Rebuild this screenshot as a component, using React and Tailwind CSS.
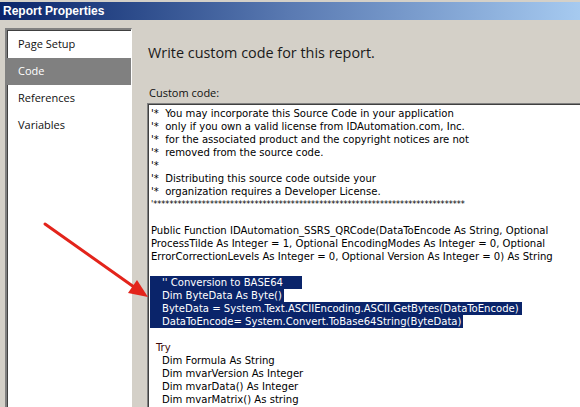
import React from "react";

const codeFont = { fontFamily: '"DejaVu Sans Condensed", "DejaVu Sans", sans-serif' };

function Line({ children, className = "" }) {
  return <div className={"h-[13px] leading-[13px] whitespace-pre " + className}>{children}</div>;
}

function Hi({ pr, children }) {
  return (
    <div className="h-[13px] leading-[13px] whitespace-pre">
      <span className={"inline-block h-[13px] bg-[#0a246a] text-white pl-[12px] -ml-[1px] " + pr}>{children}</span>
    </div>
  );
}

export default function App() {
  return (
    <div className="relative w-[580px] h-[407px] overflow-hidden bg-[#d4d0c8] flex flex-col pt-[2px]" style={{ fontFamily: '"Liberation Sans", Arial, sans-serif' }}>
      <div className="h-[18px] shrink-0 bg-gradient-to-r from-[#0a246a] via-[#5a7ab2] to-[#a6caf0] flex items-center pl-[3px]">
        <span className="text-white font-bold text-[12px] leading-none">Report Properties</span>
      </div>
      <div className="flex flex-1 min-h-0 pt-[8px]">
        <div className="ml-[5px] w-[127px] shrink-0 bg-white border-t-2 border-l-2 border-t-[#808080] border-l-[#808080] border-r border-r-white shadow-[inset_1px_1px_0_#404040] pt-[1px] text-[11px] text-[#101010]" style={{ fontFamily: '"Open Sans", sans-serif' }}>
          <div className="h-[27px] flex items-center pl-[11px]">Page Setup</div>
          <div className="h-[27px] flex items-center pl-[11px] bg-[#808080] text-white">Code</div>
          <div className="h-[27px] flex items-center pl-[11px]">References</div>
          <div className="h-[27px] flex items-center pl-[11px]">Variables</div>
        </div>
        <div className="flex-1 flex flex-col pl-[15px] min-w-0">
          <div className="h-[50px] shrink-0 flex items-center pl-[1px] text-[14.4px] text-[#1a1a1a]" style={{ fontFamily: '"Open Sans", sans-serif' }}>
            Write custom code for this report.
          </div>
          <div className="h-[25px] shrink-0 flex items-end pl-[2px] pb-[3px] text-[11px] leading-[14px] text-[#101010]" style={{ fontFamily: '"Open Sans", sans-serif' }}>
            Custom code:
          </div>
          <div className="flex-1 bg-white border-t border-l border-[#808080] shadow-[inset_1px_1px_0_#404040] pt-[3px] pl-[3px] text-[11.2px] text-black" style={codeFont}>
            <Line>{"'*  You may incorporate this Source Code in your application"}</Line>
            <Line>{"'*  only if you own a valid license from IDAutomation.com, Inc."}</Line>
            <Line>{"'*  for the associated product and the copyright notices are not"}</Line>
            <Line>{"'*  removed from the source code."}</Line>
            <Line>{"'*"}</Line>
            <Line>{"'*  Distributing this source code outside your"}</Line>
            <Line>{"'*  organization requires a Developer License."}</Line>
            <Line className="text-[9px]">{"'*****************************************************************************"}</Line>
            <Line>{" "}</Line>
            <Line>{"Public Function IDAutomation_SSRS_QRCode(DataToEncode As String, Optional"}</Line>
            <Line>{"ProcessTilde As Integer = 1, Optional EncodingModes As Integer = 0, Optional"}</Line>
            <Line>{"ErrorCorrectionLevels As Integer = 0, Optional Version As Integer = 0) As String"}</Line>
            <Line>{" "}</Line>
            <Hi pr="pr-[19px]">{"'' Conversion to BASE64"}</Hi>
            <Hi pr="pr-[2px]">{"Dim ByteData As Byte()"}</Hi>
            <Hi pr="pr-[3px]">{"ByteData = System.Text.ASCIIEncoding.ASCII.GetBytes(DataToEncode)"}</Hi>
            <Hi pr="pr-[2px]">{"DataToEncode= System.Convert.ToBase64String(ByteData)"}</Hi>
            <Line>{" "}</Line>
            <Line className="pl-[5px] text-[#3a0808]">{"Try"}</Line>
            <Line className="pl-[11px]">{"Dim Formula As String"}</Line>
            <Line className="pl-[11px]">{"Dim mvarVersion As Integer"}</Line>
            <Line className="pl-[11px]">{"Dim mvarData() As Integer"}</Line>
            <Line className="pl-[11px]">{"Dim mvarMatrix() As string"}</Line>
          </div>
        </div>
      </div>
      <svg className="absolute left-0 top-0 pointer-events-none" width="580" height="407">
        <line x1="45" y1="224" x2="134" y2="287" stroke="#e3241b" strokeWidth="3" strokeLinecap="round" />
        <polygon points="148,297 128,293 137,280" fill="#e3241b" />
      </svg>
    </div>
  );
}
